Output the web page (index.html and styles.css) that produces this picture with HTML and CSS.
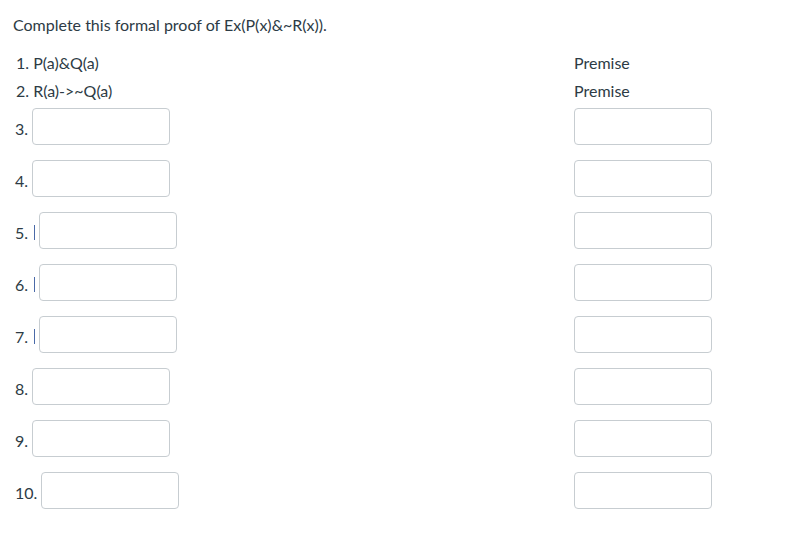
FILE: index.html
```html
<!DOCTYPE html>
<html>
<head>
<meta charset="utf-8">
<link rel="stylesheet" href="styles.css">
</head>
<body>
<div class="page">
  <p class="title">Complete this formal proof of Ex(P(x)&amp;~R(x)).</p>
  <div class="proof">
    <div class="line premise"><span class="formula">1. P(a)&amp;Q(a)</span><span class="reason">Premise</span></div>
    <div class="line premise"><span class="formula">2. R(a)-&gt;~Q(a)</span><span class="reason">Premise</span></div>
    <div class="line step"><span class="formula"><span class="num">3.</span> <span class="box"></span></span><span class="box rbox"></span></div>
    <div class="line step"><span class="formula"><span class="num">4.</span> <span class="box"></span></span><span class="box rbox"></span></div>
    <div class="line step"><span class="formula"><span class="num">5.</span> <span class="bar"></span> <span class="box"></span></span><span class="box rbox"></span></div>
    <div class="line step"><span class="formula"><span class="num">6.</span> <span class="bar"></span> <span class="box"></span></span><span class="box rbox"></span></div>
    <div class="line step"><span class="formula"><span class="num">7.</span> <span class="bar"></span> <span class="box"></span></span><span class="box rbox"></span></div>
    <div class="line step"><span class="formula"><span class="num">8.</span> <span class="box"></span></span><span class="box rbox"></span></div>
    <div class="line step"><span class="formula"><span class="num">9.</span> <span class="box"></span></span><span class="box rbox"></span></div>
    <div class="line step"><span class="formula"><span class="num">10.</span> <span class="box"></span></span><span class="box rbox"></span></div>
  </div>
</div>
</body>
</html>
```
FILE: styles.css
```css
html, body {
  margin: 0;
  padding: 0;
  background: #ffffff;
}
body {
  font-family: Lato, "Liberation Sans", sans-serif;
  font-size: 16px;
  color: #2d3b45;
}
.page {
  padding: 0 0 0 13px;
}
.title {
  margin: 0;
  padding-top: 14px;
  line-height: 22px;
  height: 35px;
}
.proof {
  display: flex;
  flex-direction: column;
}
.line {
  display: grid;
  grid-template-columns: 561px 138px;
}
.premise {
  height: 28px;
  line-height: 28px;
}
.premise .formula {
  padding-left: 3px;
}
.step {
  height: 37px;
  margin-bottom: 15px;
  align-items: end;
}
.premise + .step {
  margin-top: 3px;
}
.step .formula {
  padding-left: 2px;
  display: flex;
  align-items: flex-end;
  gap: 4px;
}
.num {
  line-height: 20px;
  padding-bottom: 6px;
}
.bar {
  width: 0;
  height: 15px;
  border-left: 1.5px solid #4a6aa8;
  margin: 0 0 9px 2px;
}
.box {
  display: block;
  box-sizing: border-box;
  width: 138px;
  height: 37px;
  border: 1px solid #c7cdd1;
  border-radius: 4px;
  background: #fff;
}
```
